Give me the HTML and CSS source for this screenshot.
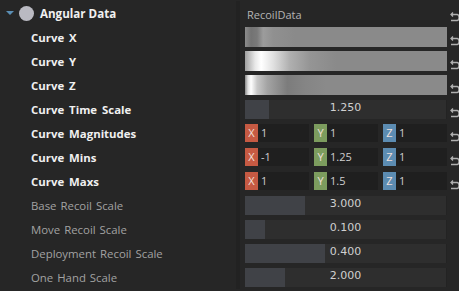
FILE: index.html
```html
<!DOCTYPE html>
<html lang="en">
<head>
<meta charset="UTF-8">
<title>Recoil Data</title>
<link rel="stylesheet" href="styles.css">
</head>
<body>
  <div class="inspector">
    <div class="row">
      <div class="label group">
        <span class="arrow"></span>
        <span class="dot"></span>
        Angular Data
      </div>
      <div class="value"><span class="type-name">RecoilData</span></div>
      <div class="reset"><svg viewBox="0 0 12 12"><path d="M5 1L3 3L5 5M3 3H9Q11 3 11 6Q11 9 9 9H3" /></svg></div>
    </div>

    <div class="row">
      <div class="label">Curve X</div>
      <div class="value"><div class="curve curve-x"></div></div>
      <div class="reset"><svg viewBox="0 0 12 12"><path d="M5 1L3 3L5 5M3 3H9Q11 3 11 6Q11 9 9 9H3" /></svg></div>
    </div>
    <div class="row">
      <div class="label">Curve Y</div>
      <div class="value"><div class="curve curve-y"></div></div>
      <div class="reset"><svg viewBox="0 0 12 12"><path d="M5 1L3 3L5 5M3 3H9Q11 3 11 6Q11 9 9 9H3" /></svg></div>
    </div>
    <div class="row">
      <div class="label">Curve Z</div>
      <div class="value"><div class="curve curve-z"></div></div>
      <div class="reset"><svg viewBox="0 0 12 12"><path d="M5 1L3 3L5 5M3 3H9Q11 3 11 6Q11 9 9 9H3" /></svg></div>
    </div>

    <div class="row">
      <div class="label">Curve Time Scale</div>
      <div class="value"><div class="slider"><div class="fill" style="width: 12%"></div><span>1.250</span></div></div>
      <div class="reset"><svg viewBox="0 0 12 12"><path d="M5 1L3 3L5 5M3 3H9Q11 3 11 6Q11 9 9 9H3" /></svg></div>
    </div>

    <div class="row">
      <div class="label">Curve Magnitudes</div>
      <div class="value vector">
        <div class="axis"><span class="tag tag-x">X</span><span class="num">1</span></div>
        <div class="axis"><span class="tag tag-y">Y</span><span class="num">1</span></div>
        <div class="axis"><span class="tag tag-z">Z</span><span class="num">1</span></div>
      </div>
      <div class="reset"><svg viewBox="0 0 12 12"><path d="M5 1L3 3L5 5M3 3H9Q11 3 11 6Q11 9 9 9H3" /></svg></div>
    </div>
    <div class="row">
      <div class="label">Curve Mins</div>
      <div class="value vector">
        <div class="axis"><span class="tag tag-x">X</span><span class="num">-1</span></div>
        <div class="axis"><span class="tag tag-y">Y</span><span class="num">1.25</span></div>
        <div class="axis"><span class="tag tag-z">Z</span><span class="num">1</span></div>
      </div>
      <div class="reset"><svg viewBox="0 0 12 12"><path d="M5 1L3 3L5 5M3 3H9Q11 3 11 6Q11 9 9 9H3" /></svg></div>
    </div>
    <div class="row">
      <div class="label">Curve Maxs</div>
      <div class="value vector">
        <div class="axis"><span class="tag tag-x">X</span><span class="num">1</span></div>
        <div class="axis"><span class="tag tag-y">Y</span><span class="num">1.5</span></div>
        <div class="axis"><span class="tag tag-z">Z</span><span class="num">1</span></div>
      </div>
      <div class="reset"><svg viewBox="0 0 12 12"><path d="M5 1L3 3L5 5M3 3H9Q11 3 11 6Q11 9 9 9H3" /></svg></div>
    </div>

    <div class="row">
      <div class="label plain">Base Recoil Scale</div>
      <div class="value"><div class="slider"><div class="fill" style="width: 30%"></div><span>3.000</span></div></div>
    </div>
    <div class="row">
      <div class="label plain">Move Recoil Scale</div>
      <div class="value"><div class="slider"><div class="fill" style="width: 10%"></div><span>0.100</span></div></div>
    </div>
    <div class="row">
      <div class="label plain">Deployment Recoil Scale</div>
      <div class="value"><div class="slider"><div class="fill" style="width: 40%"></div><span>0.400</span></div></div>
    </div>
    <div class="row">
      <div class="label plain">One Hand Scale</div>
      <div class="value"><div class="slider"><div class="fill" style="width: 20%"></div><span>2.000</span></div></div>
    </div>
  </div>
</body>
</html>
```

FILE: styles.css
```css
body {
  margin: 0;
  background-color: #262626;
  font-family: "Open Sans", "Noto Sans", sans-serif;
  overflow: hidden;
}

.inspector {
  padding-top: 1px;
}

/* one property per row */
.row {
  display: grid;
  grid-template-columns: 236px 4px 1fr 12px;
  height: 24px;
  align-items: center;
}

.row::before {
  content: "";
  grid-column: 2;
  grid-row: 1;
  align-self: stretch;
  background-color: #222;
}

.label {
  grid-column: 1;
  grid-row: 1;
  padding-left: 31px;
  font-size: 11.4px;
  font-weight: bold;
  color: #f0f0f0;
  word-spacing: 2px;
  white-space: nowrap;
}

.label.plain {
  font-weight: normal;
  color: #a2a2a2;
  word-spacing: 1px;
}

.label.group {
  display: flex;
  align-items: center;
  padding-left: 6px;
  word-spacing: 0;
  font-size: 11.6px;
}

.arrow {
  width: 0;
  height: 0;
  border-left: 4px solid transparent;
  border-right: 4px solid transparent;
  border-top: 4px solid #5b8fb5;
  margin-right: 5px;
}

.dot {
  width: 15px;
  height: 15px;
  border-radius: 50%;
  background-color: #babac2;
  margin-right: 6px;
}

.value {
  grid-column: 3;
  grid-row: 1;
  padding-left: 5px;
}

.type-name {
  font-size: 11px;
  color: #b4b4b4;
  padding-left: 2px;
}

.reset {
  grid-column: 4;
  grid-row: 1;
  height: 13px;
  padding-left: 1px;
}

.reset svg {
  width: 12px;
  height: 13px;
  fill: none;
  stroke: #b0b0b0;
  stroke-width: 1.3;
}

/* curve previews */
.curve {
  height: 20px;
  background-color: #8a8a8a;
}

.curve-x {
  background: linear-gradient(to right, #8c8c8c 0%, #737373 3%, #7a7a7a 6%, #9c9c9c 9%, #909090 14%, #8a8a8a 25%, #8a8a8a 100%);
}

.curve-y {
  background: linear-gradient(to right, #a0a0a0 0%, #e8e8e8 5%, #ffffff 8%, #e0e0e0 14%, #b0b0b0 22%, #959595 32%, #8a8a8a 45%, #8a8a8a 100%);
}

.curve-z {
  background: linear-gradient(to right, #8a8a8a 0%, #e0e0e0 1.5%, #ffffff 3%, #c8c8c8 6%, #a4a4a4 11%, #7c7c7c 21%, #858585 30%, #8a8a8a 40%, #8a8a8a 100%);
}

/* number sliders */
.slider {
  position: relative;
  height: 19px;
  background-color: #2e2e2e;
  border-right: 1px solid #232323;
}

.slider .fill {
  height: 100%;
  background-color: #404247;
}

.slider span {
  position: absolute;
  left: 0;
  right: 0;
  top: 1px;
  text-align: center;
  font-family: "DejaVu Sans", sans-serif;
  font-size: 11px;
  color: #d0d0d0;
}

/* vector fields */
.vector {
  display: flex;
  gap: 5px;
}

.axis {
  flex: 1;
  display: flex;
  height: 18px;
  background-color: #1f1f1f;
}

.tag {
  width: 13px;
  text-align: center;
  font-size: 11px;
  line-height: 18px;
  color: #f0e0dc;
}

.tag-x {
  background-color: #c65a43;
}

.tag-y {
  background-color: #7c9c5e;
}

.tag-z {
  background-color: #5c8cb2;
}

.num {
  padding-left: 3px;
  font-size: 11px;
  line-height: 18px;
  color: #cfcfcf;
}
```
